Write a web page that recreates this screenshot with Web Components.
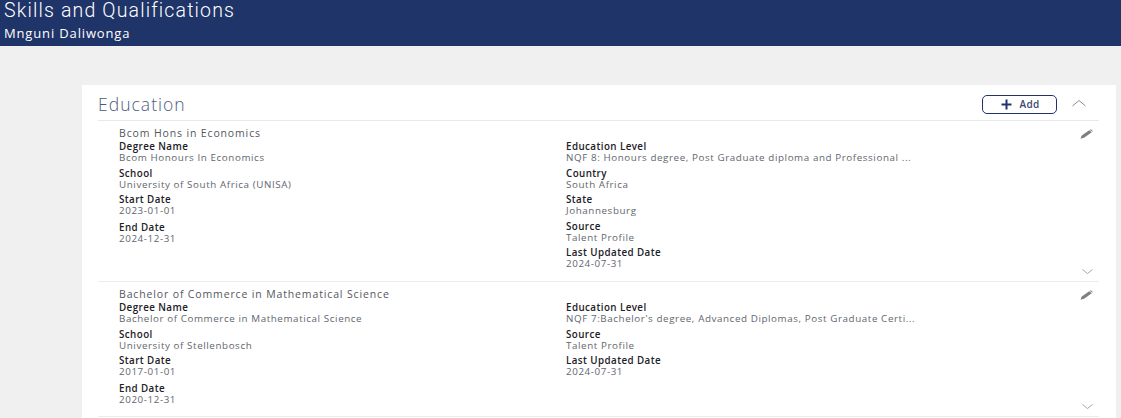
<!DOCTYPE html>
<html lang="en">
<head>
<meta charset="utf-8">
<title>Skills and Qualifications</title>
<style>
html, body { margin: 0; height: 418px; overflow: hidden; }
body { background: #f0f0f0; font-family: "Open Sans", "Noto Sans", "Liberation Sans", sans-serif; }
</style>
</head>
<body>
<page-header heading="Skills and Qualifications" person="Mnguni Daliwonga"></page-header>
<section-card heading="Education">
  <edu-entry heading="Bcom Hons in Economics" height="161">
    <edu-field slot="left" label="Degree Name" value="Bcom Honours In Economics"></edu-field>
    <edu-field slot="left" label="School" value="University of South Africa (UNISA)"></edu-field>
    <edu-field slot="left" label="Start Date" value="2023-01-01"></edu-field>
    <edu-field slot="left" label="End Date" value="2024-12-31" style="margin-top:1.5px"></edu-field>
    <edu-field slot="right" label="Education Level" value="NQF 8: Honours degree, Post Graduate diploma and Professional ..."></edu-field>
    <edu-field slot="right" label="Country" value="South Africa"></edu-field>
    <edu-field slot="right" label="State" value="Johannesburg"></edu-field>
    <edu-field slot="right" label="Source" value="Talent Profile"></edu-field>
    <edu-field slot="right" label="Last Updated Date" value="2024-07-31"></edu-field>
  </edu-entry>
  <edu-entry heading="Bachelor of Commerce in Mathematical Science" height="135">
    <edu-field slot="left" label="Degree Name" value="Bachelor of Commerce in Mathematical Science"></edu-field>
    <edu-field slot="left" label="School" value="University of Stellenbosch"></edu-field>
    <edu-field slot="left" label="Start Date" value="2017-01-01"></edu-field>
    <edu-field slot="left" label="End Date" value="2020-12-31" style="margin-top:1.5px"></edu-field>
    <edu-field slot="right" label="Education Level" value="NQF 7:Bachelor's degree, Advanced Diplomas, Post Graduate Certi..."></edu-field>
    <edu-field slot="right" label="Source" value="Talent Profile"></edu-field>
    <edu-field slot="right" label="Last Updated Date" value="2024-07-31"></edu-field>
  </edu-entry>
</section-card>

<script>
class PageHeader extends HTMLElement {
  constructor() {
    super();
    this._sR = this.attachShadow({ mode: 'open' });
    this._sR.innerHTML = `
      <style>
        :host { display: block; height: 46px; background: #1f3468; color: #fff; box-sizing: border-box; padding-left: 4px; }
        h1 { margin: 0; font-family: Roboto, "Open Sans", sans-serif; font-weight: 300; font-size: 19.5px; line-height: 22px; letter-spacing: 1.15px; white-space: nowrap; }
        p { margin: 3px 0 0; font-size: 13px; line-height: 16px; letter-spacing: .85px; }
      </style>
      <h1>${this.getAttribute('heading')}</h1>
      <p>${this.getAttribute('person')}</p>`;
  }
}
customElements.define('page-header', PageHeader);

class AddButton extends HTMLElement {
  constructor() {
    super();
    this._sR = this.attachShadow({ mode: 'open' });
    this._sR.innerHTML = `
      <style>
        :host { display: flex; align-items: center; justify-content: center; gap: 8px; box-sizing: border-box; width: 75px; height: 19px; border: 1px solid #1f3468; border-radius: 5px; background: #fff; color: #39496f; font-size: 10px; font-weight: 600; letter-spacing: .3px; cursor: pointer; padding-left: 1px; }
        svg { width: 11px; height: 11px; }
      </style>
      <svg viewBox="0 0 11 11"><path d="M5.5 .5v10M.5 5.5h10" stroke="#1f3468" stroke-width="2" fill="none"/></svg>
      <span><slot></slot></span>`;
  }
}
customElements.define('add-button', AddButton);

class SectionCard extends HTMLElement {
  constructor() {
    super();
    this._sR = this.attachShadow({ mode: 'open' });
    this._sR.innerHTML = `
      <style>
        :host { display: block; box-sizing: border-box; margin: 39px 5px 0 82px; height: 333px; padding: 0 17px 0 16px; background: #fff; }
        header { display: flex; align-items: center; height: 32px; padding-top: 3px; border-bottom: 1px solid #e6e8ec; }
        h2 { flex: 1; margin: 0; font-weight: 300; font-size: 17.5px; letter-spacing: 1.03px; color: #4c5a7d; position: relative; top: 0; }
        .toggle { width: 14px; height: 8px; margin: 0 13px 0 15px; position: relative; top: -1px; }
      </style>
      <header>
        <h2>${this.getAttribute('heading')}</h2>
        <add-button>Add</add-button>
        <svg class="toggle" viewBox="0 0 14 8"><path d="M.5 7 7 1.5 13.5 7" stroke="#8a8f99" stroke-width="1" fill="none"/></svg>
      </header>
      <slot></slot>`;
  }
}
customElements.define('section-card', SectionCard);

class EduEntry extends HTMLElement {
  constructor() {
    super();
    this._sR = this.attachShadow({ mode: 'open' });
    this._sR.innerHTML = `
      <style>
        :host { display: block; position: relative; box-sizing: border-box; height: ${this.getAttribute('height')}px; padding: 6px 0 0 21px; border-bottom: 1px solid #ececec; }
        h3 { margin: 0 0 1px; font-weight: 400; font-size: 10.5px; line-height: 13px; letter-spacing: .86px; color: #54575e; white-space: nowrap; }
        .columns { display: grid; grid-template-columns: 447px 1fr; }
        .edit { position: absolute; top: 8px; right: 6px; width: 13px; height: 10px; }
        .more { position: absolute; bottom: 7px; right: 6px; width: 11px; height: 5px; }
      </style>
      <h3>${this.getAttribute('heading')}</h3>
      <div class="columns">
        <div><slot name="left"></slot></div>
        <div><slot name="right"></slot></div>
      </div>
      <svg class="edit" viewBox="0 0 14 14" preserveAspectRatio="none"><path d="M.6 13.5 1.6 9.6 9.9 1.8 12.7 4.6 4.4 12.4Z" fill="#7d7f84"/><path d="M10.6 1.2 11.6.4 13.6 2.4 13.3 3.8Z" fill="#7d7f84"/></svg>
      <svg class="more" viewBox="0 0 11 5"><path d="M.5.5 5.5 4.5 10.5.5" stroke="#a2a5ab" stroke-width="1" fill="none"/></svg>`;
  }
}
customElements.define('edu-entry', EduEntry);

class EduField extends HTMLElement {
  constructor() {
    super();
    this._sR = this.attachShadow({ mode: 'open' });
    this._sR.innerHTML = `
      <style>
        :host { display: block; height: 26.5px; font-size: 9.8px; line-height: 11px; white-space: nowrap; }
        b { display: block; font-weight: 600; color: #1d2026; letter-spacing: .42px; }
        span { display: block; color: #62666e; letter-spacing: .59px; }
      </style>
      <b>${this.getAttribute('label')}</b>
      <span>${this.getAttribute('value')}</span>`;
  }
}
customElements.define('edu-field', EduField);
</script>
</body>
</html>
